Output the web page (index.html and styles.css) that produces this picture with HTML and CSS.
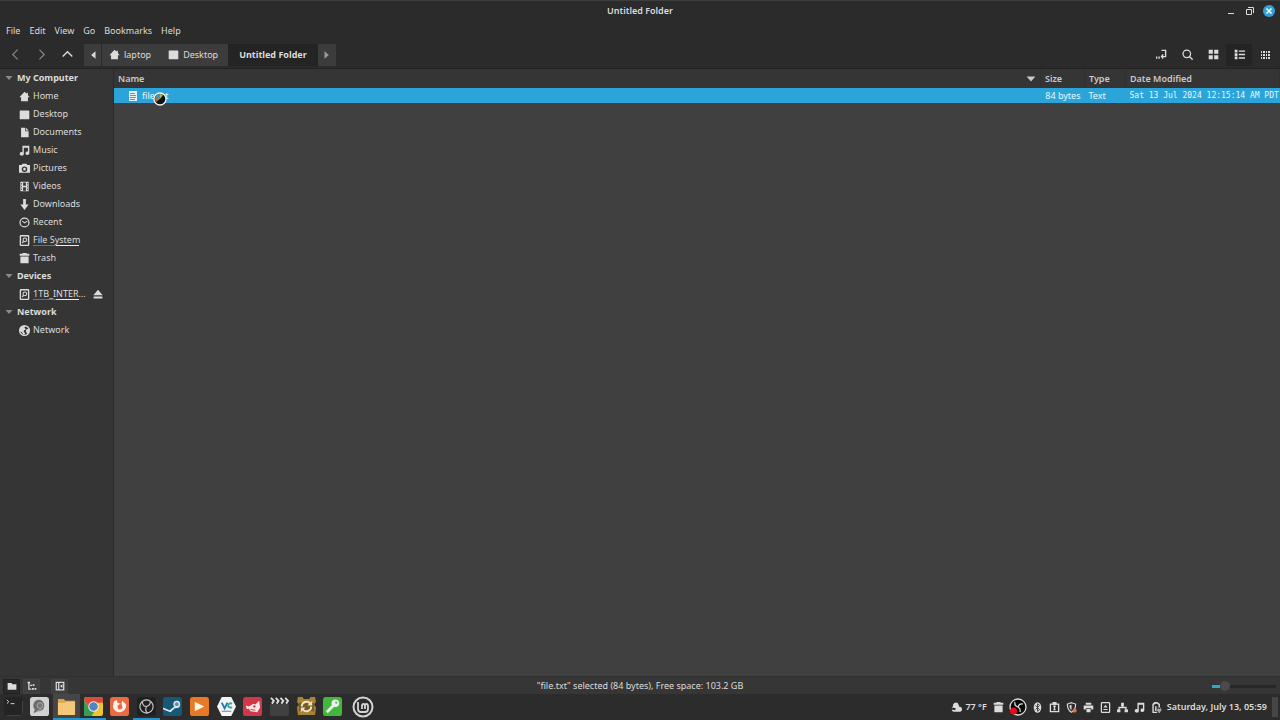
FILE: index.html
```html
<!DOCTYPE html>
<html lang="en">
<head>
<meta charset="utf-8">
<title>Untitled Folder</title>
<link rel="stylesheet" href="styles.css">
</head>
<body>
<svg class="sprite" aria-hidden="true">
  <symbol id="home" viewBox="0 0 16 16"><path d="M8 1 0.5 9H3v6h10V9h2.5L13 6.2V2.5h-2v1.6z"/></symbol>
  <symbol id="desktop" viewBox="0 0 16 16"><rect x="1" y="2" width="14" height="13" rx="1"/></symbol>
  <symbol id="document" viewBox="0 0 16 16"><path d="M3 1h6v5h5v9H3z"/><path d="M10 1l4 4h-4z"/></symbol>
  <symbol id="music" viewBox="0 0 16 16"><path d="M5 1h10v11a2.8 2.5 0 1 1-2-2.4V4H7v9a3 2.5 0 1 1-2-2.4z"/></symbol>
  <symbol id="camera" viewBox="0 0 16 16"><path fill-rule="evenodd" d="M5 1h6l1 2h4v11H0V3h4zM8 5a4 4 0 1 0 0 8 4 4 0 0 0 0-8zm0 2a2 2 0 1 1 0 4 2 2 0 0 1 0-4z"/></symbol>
  <symbol id="video" viewBox="0 0 16 16"><path fill-rule="evenodd" d="M2 1h12v14H2zM3 3v2h1V3zm0 4v2h1V7zm0 4v2h1v-2zM6 2v5h4V2zm0 7v5h4V9zM12 3v2h1V3zm0 4v2h1V7zm0 4v2h1v-2z"/></symbol>
  <symbol id="download" viewBox="0 0 16 16"><path d="M6 0h4v8h4l-6 8-6-8h4z"/></symbol>
  <symbol id="recent" viewBox="0 0 16 16"><circle cx="8" cy="8" r="6.5" fill="none" stroke="currentColor" stroke-width="1.8"/><path d="M5 6l3 2.5L12 6" fill="none" stroke="currentColor" stroke-width="1.5"/></symbol>
  <symbol id="disk" viewBox="0 0 16 16"><g fill="none" stroke="currentColor"><rect x="2" y="1" width="12" height="14" rx="1" stroke-width="2"/><circle cx="8.5" cy="7" r="2.7" stroke-width="1.5"/></g><path d="M4.5 9.5 8 9l-2.5 3h-1z"/></symbol>
  <symbol id="trash" viewBox="0 0 16 16"><path d="M1 1h4V0h6v1h4v3H1zM2 5h12v10H2z"/></symbol>
  <symbol id="globe" viewBox="0 0 16 16"><circle cx="8" cy="8" r="7" fill="none" stroke="currentColor" stroke-width="2"/><path d="M1 6l3-4 5-1-1 3 2 2-3 2v2l2 2-2 3-3-5-3-1zM11 6l4-1v5l-3 3-2-4z"/></symbol>
  <symbol id="eject" viewBox="0 0 16 16"><path d="M8 1 15.5 10H.5zM1 12h14v3H1z"/></symbol>
  <symbol id="tri-down" viewBox="0 0 16 16"><path d="M1 4h14l-7 8z"/></symbol>
  <symbol id="tri-left" viewBox="0 0 16 16"><path d="M12 2v12L5 8z"/></symbol>
  <symbol id="tri-right" viewBox="0 0 16 16"><path d="M4 2v12l7-6z"/></symbol>
  <symbol id="chev-left" viewBox="0 0 16 16"><path d="M11 1 4 8l7 7" fill="none" stroke="currentColor" stroke-width="1.6"/></symbol>
  <symbol id="chev-right" viewBox="0 0 16 16"><path d="M5 1l7 7-7 7" fill="none" stroke="currentColor" stroke-width="1.6"/></symbol>
  <symbol id="chev-up" viewBox="0 0 16 16"><path d="M1 11l7-7 7 7" fill="none" stroke="currentColor" stroke-width="2"/></symbol>
  <symbol id="path-entry" viewBox="0 0 16 16"><path d="M8 2h6v9H8M10.500 8 8 11l2.500 3" fill="none" stroke="currentColor" stroke-width="2"/><path d="M0 11h2v3H0zM3.500 11h2v3h-2z"/></symbol>
  <symbol id="search" viewBox="0 0 16 16"><circle cx="7" cy="7" r="5.5" fill="none" stroke="currentColor" stroke-width="1.8"/><path d="M10.500 10.500l5 5" stroke="currentColor" stroke-width="2"/></symbol>
  <symbol id="grid" viewBox="0 0 16 16"><path d="M1 1h6v6H1zM9 1h6v6H9zM1 9h6v6H1zM9 9h6v6H9z"/></symbol>
  <symbol id="list" viewBox="0 0 16 16"><path d="M1 1h4v4H1zM1 6h4v4H1zM1 11h4v4H1zM7 2h9v2H7zM7 7h9v2H7zM7 12h9v2H7z"/></symbol>
  <symbol id="compact" viewBox="0 0 10 10"><path d="M1 1h1v2H1zM3 1h2v2H3zM1 4h1v2H1zM3 4h2v2H3zM1 7h1v2H1zM3 7h2v2H3zM6 1h1v2H6zM8 1h2v2H8zM6 4h1v2H6zM8 4h2v2H8zM6 7h1v2H6zM8 7h2v2H8z"/></symbol>
  <symbol id="folder" viewBox="0 0 16 16"><path d="M1 3h6l2 2h6v9H1z"/></symbol>
  <symbol id="tree" viewBox="0 0 16 16"><path d="M1 1h4v3H4v8h3v2H2V4H1zM5 6h3v2H5zM9 5h3v3H9zM8 11h3v3H8zM12 11h3v3h-3z"/></symbol>
  <symbol id="panel" viewBox="0 0 16 16"><path fill-rule="evenodd" d="M1 1h14v14H1zM3 3v10h2V3zm4 0v10h6V3z"/><path d="M12 5v6L8 8z"/></symbol>
  <symbol id="cloud" viewBox="0 0 16 16"><path d="M3 6a4 4 0 0 1 8-2l1 3a3.500 3.500 0 0 1 1 7H4a3 3 0 0 1-3-3l5 1 1-3-6-1z"/></symbol>
  <symbol id="bluetooth" viewBox="0 0 16 16"><ellipse cx="8" cy="8" rx="5.500" ry="7.500"/><path d="M5 5l6 6-3 2.500v-11L11 5l-6 6" fill="none" stroke="#2c2c2c" stroke-width="1.200"/></symbol>
  <symbol id="clipboard" viewBox="0 0 16 16"><path d="M2 3h12v11H2z" fill="none" stroke="currentColor" stroke-width="2"/><path d="M5 0h6v4H5zM6 5h4v2H9v4h1v1H6v-1h1V7H6z"/></symbol>
  <symbol id="shield" viewBox="0 0 16 16"><path d="M8 1l6 2c0 6-2 10-6 12C4 13 2 9 2 3z" fill="none" stroke="currentColor" stroke-width="1.700"/><path d="M8 4v8C6 10 5 8 5 5z"/><circle cx="12.500" cy="12.500" r="3" fill="#df7544"/></symbol>
  <symbol id="printer" viewBox="0 0 16 16"><path d="M4 1h8v3H4zM1 5h14v6h-3V9H4v2H1zM5 10h6v5H5z"/></symbol>
  <symbol id="usb" viewBox="0 0 16 16"><rect x="2" y="1" width="12" height="14" rx="1" fill="none" stroke="currentColor" stroke-width="1.800"/><path d="M8 4l3 4H5zM5 10h6v1.500H5z"/></symbol>
  <symbol id="network" viewBox="0 0 16 16"><path d="M6 1h4v5H9v1h5v4h2v4h-5v-4h1V9H4v2h1v4H0v-4h2V7h5V6H6z"/></symbol>
  <symbol id="battery" viewBox="0 0 16 16"><path d="M2 3l3-3h4l4 3v5h-2V4L8 2 4 4v10h5v2H2z"/><path d="M6 6h2v7H6z"/><path d="M10 8h1v2h2V8h1v2h1v3l-2 1v2h-2v-2l-2-1v-3h1z" fill="#aaa"/></symbol>
</svg>

<header class="chrome">
  <div class="titlebar">
    <h1 class="title">Untitled Folder</h1>
    <div class="window-controls">
      <button class="win-btn" aria-label="Minimize"><svg class="ic10" viewBox="0 0 10 10"><path d="M2 7h6v1H2z"/></svg></button>
      <button class="win-btn" aria-label="Restore"><svg class="ic10" viewBox="0 0 10 10"><path d="M1.500 3.500h5v5h-5zM3 1.500h5.500V7" fill="none" stroke="currentColor"/></svg></button>
      <button class="win-btn close" aria-label="Close"><svg class="ic10" viewBox="0 0 10 10"><path d="M2.500 2.500l5 5M7.500 2.500l-5 5" fill="none" stroke="currentColor" stroke-width="1.500"/></svg></button>
    </div>
  </div>
  <nav class="menubar" aria-label="Menu">
    <button>File</button><button>Edit</button><button>View</button><button>Go</button><button>Bookmarks</button><button>Help</button>
  </nav>
  <div class="toolbar">
    <div class="nav-buttons">
      <button class="tool dim" aria-label="Back"><svg class="ic12"><use href="#chev-left"/></svg></button>
      <button class="tool dim" aria-label="Forward"><svg class="ic12"><use href="#chev-right"/></svg></button>
      <button class="tool" aria-label="Up"><svg class="ic12"><use href="#chev-up"/></svg></button>
    </div>
    <nav class="pathbar" aria-label="Path">
      <button class="crumb arrow" aria-label="Scroll left"><svg class="ic10"><use href="#tri-left"/></svg></button>
      <button class="crumb"><svg class="ic12"><use href="#home"/></svg>laptop</button>
      <button class="crumb"><svg class="ic12"><use href="#desktop"/></svg>Desktop</button>
      <button class="crumb current">Untitled Folder</button>
      <button class="crumb arrow muted" aria-label="Scroll right"><svg class="ic10"><use href="#tri-right"/></svg></button>
    </nav>
    <div class="view-buttons">
      <button class="tool" aria-label="Toggle location entry"><svg class="ic12"><use href="#path-entry"/></svg></button>
      <button class="tool" aria-label="Search"><svg class="ic12"><use href="#search"/></svg></button>
      <button class="tool" aria-label="Icon view"><svg class="ic12"><use href="#grid"/></svg></button>
      <button class="tool active" aria-label="List view"><svg class="ic12"><use href="#list"/></svg></button>
      <button class="tool" aria-label="Compact view"><svg class="ic10"><use href="#compact"/></svg></button>
    </div>
  </div>
</header>

<div class="workspace">
  <aside class="sidebar">
    <h2 class="group"><svg class="ic8"><use href="#tri-down"/></svg>My Computer</h2>
    <a class="place" href="#"><svg class="ic12"><use href="#home"/></svg><span>Home</span></a>
    <a class="place" href="#"><svg class="ic12"><use href="#desktop"/></svg><span>Desktop</span></a>
    <a class="place" href="#"><svg class="ic12"><use href="#document"/></svg><span>Documents</span></a>
    <a class="place" href="#"><svg class="ic12"><use href="#music"/></svg><span>Music</span></a>
    <a class="place" href="#"><svg class="ic12"><use href="#camera"/></svg><span>Pictures</span></a>
    <a class="place" href="#"><svg class="ic12"><use href="#video"/></svg><span>Videos</span></a>
    <a class="place" href="#"><svg class="ic12"><use href="#download"/></svg><span>Downloads</span></a>
    <a class="place" href="#"><svg class="ic12"><use href="#recent"/></svg><span>Recent</span></a>
    <a class="place" href="#"><svg class="ic12"><use href="#disk"/></svg><span class="usage">File System</span></a>
    <a class="place" href="#"><svg class="ic12"><use href="#trash"/></svg><span>Trash</span></a>
    <h2 class="group"><svg class="ic8"><use href="#tri-down"/></svg>Devices</h2>
    <div class="device">
      <a class="place" href="#"><svg class="ic12"><use href="#disk"/></svg><span class="usage">1TB_INTER…</span></a>
      <button class="eject" aria-label="Eject"><svg class="ic10"><use href="#eject"/></svg></button>
    </div>
    <h2 class="group"><svg class="ic8"><use href="#tri-down"/></svg>Network</h2>
    <a class="place" href="#"><svg class="ic12"><use href="#globe"/></svg><span>Network</span></a>
  </aside>
  <main class="files">
    <table class="file-table">
      <colgroup><col><col class="col-size"><col class="col-type"><col class="col-date"></colgroup>
      <thead>
        <tr><th><span class="sorted">Name<svg class="ic10"><use href="#tri-down"/></svg></span></th><th>Size</th><th>Type</th><th>Date Modified</th></tr>
      </thead>
      <tbody>
        <tr>
          <td class="name"><span class="file"><svg class="ic10" viewBox="0 0 10 10"><path d="M1 0h8v10H1z" fill="#e8f1f5"/><path d="M2 2.500h5M2 4.500h6M2 6.500h6M2 8.500h5" stroke="#6795aa"/></svg>file.txt<svg class="cursor" viewBox="0 0 14 14"><circle cx="7" cy="7" r="6" fill="#111"/><path d="M7 7 2 7a5 5 0 0 1 5-5z" fill="#4999a4"/><path d="M7 7V2a5 5 0 0 1 3 1z" fill="#a8bc48"/><path d="M7 7l-4 3a5 5 0 0 1-1-4z" fill="#c46b22"/><circle cx="7" cy="7" r="6" fill="none" stroke="#f2f2f2" stroke-width="1.300"/></svg></span></td>
          <td class="size">84 bytes</td><td>Text</td><td class="date">Sat 13 Jul 2024 12:15:14 AM PDT</td>
        </tr>
      </tbody>
    </table>
  </main>
</div>

<footer class="statusbar">
  <div class="status-buttons">
    <button class="pane-btn pressed" aria-label="Places"><svg class="ic10"><use href="#folder"/></svg></button>
    <button class="pane-btn" aria-label="Tree"><svg class="ic10"><use href="#tree"/></svg></button>
    <button class="pane-btn apart" aria-label="Hide sidebar"><svg class="ic10"><use href="#panel"/></svg></button>
  </div>
  <p class="status">"file.txt" selected (84 bytes), Free space: 103.2 GB</p>
  <div class="zoom-box"><input class="zoom" type="range" min="0" max="100" value="14" aria-label="Zoom"></div>
</footer>

<div class="taskbar">
  <div class="launchers">
    <button class="app" aria-label="Terminal"><svg viewBox="0 0 20 20"><rect width="20" height="20" rx="3" fill="#242424"/><path d="M3 19.500h14a2.500 2.500 0 0 0 2.500-3V4" fill="none" stroke="#444"/><path d="M3 3l2 2-2 2M7 7h4" fill="none" stroke="#ddd"/></svg></button>
    <button class="app" aria-label="System settings"><svg viewBox="0 0 20 20"><rect x="0" y="0" width="20" height="20" rx="3" fill="#d2d2d2"/><path d="M10 3a6 6 0 1 1-2 12l-4 2 1-4A6 6 0 0 1 10 3z" fill="#6d6d6d"/><circle cx="10.500" cy="9" r="3" fill="#777" stroke="#aaa"/><path d="M7 15l5-2" stroke="#aaa"/></svg></button>
    <button class="app focused open" aria-label="Files"><svg viewBox="0 0 20 20"><path d="M1 2h6l2 2h10v14H1z" fill="#dca54f"/><path d="M1 6h7l2-1h9v14H1z" fill="#f5c779"/></svg></button>
    <button class="app open" aria-label="Chrome"><svg viewBox="0 0 20 20"><rect width="20" height="20" rx="3" fill="#efc52f"/><path d="M3 0h14a3 3 0 0 1 3 3v3H10L6 12 0 3a3 3 0 0 1 3-3z" fill="#db4a3a"/><path d="M0 3l6 10 5 2-3 5H3a3 3 0 0 1-3-3z" fill="#369e51"/><circle cx="10" cy="10" r="5.500" fill="#eee"/><circle cx="10" cy="10" r="4.500" fill="#5085c4"/></svg></button>
    <button class="app" aria-label="Firefox"><svg viewBox="0 0 20 20"><rect width="20" height="20" rx="3" fill="#e96a43"/><path d="M4 5l3-2 1 3 3 1-3 2v2a2.500 2.500 0 1 0 5-1l-1-3 1-3 4 4a7 7 0 1 1-14 2z" fill="#fff0ea"/></svg></button>
    <button class="app open" aria-label="OBS Studio"><svg viewBox="0 0 20 20"><rect width="20" height="20" rx="3" fill="#202020"/><g fill="none" stroke="#c9c9c9" stroke-width="1.200"><circle cx="10" cy="10" r="7"/><path d="M10 10Q6 10 5.500 5M10 10q4-1 4-5M10 10q-2 4 1 7"/></g></svg></button>
    <button class="app" aria-label="Steam"><svg viewBox="0 0 20 20"><rect width="20" height="20" rx="3" fill="#175879"/><path d="M0 11l7 3 5-4-1-3 4-3 3 3-1 4-5 1-4 4-3-1-5-2z" fill="#d7e5ed"/><circle cx="14.500" cy="7.500" r="3.500" fill="#d7e5ed"/><circle cx="14.500" cy="7.500" r="2" fill="#608ba1"/></svg></button>
    <button class="app" aria-label="Media player"><svg viewBox="0 0 20 20"><rect width="20" height="20" rx="3" fill="#e77927"/><path d="M5 5l10 5-10 5z" fill="#fff5e9"/></svg></button>
    <button class="app" aria-label="VeraCrypt"><svg viewBox="0 0 20 20"><path d="M5 0h10l5 10-5 10H5L0 10z" fill="#f5f5f5"/><path d="M5 6l3 6 3-6" fill="none" stroke="#257dae" stroke-width="2"/><path d="M16 7c-5-2-6 5-1 4h1" fill="none" stroke="#35a89c" stroke-width="2"/><path d="M5 15h10" stroke="#777"/></svg></button>
    <button class="app" aria-label="GIMP"><svg viewBox="0 0 20 20"><rect width="20" height="20" rx="3" fill="#ce3847"/><path d="M3 9l3 1 5-3 2 1 4-4 1 7-3 5-7-1-2-3-2 1z" fill="#f8e7e8"/><circle cx="12" cy="10" r="1.200" fill="#bd3442"/><path d="M8 13l5 1" stroke="#ce3847"/></svg></button>
    <button class="app" aria-label="Video editor"><svg viewBox="0 0 20 20"><rect y="7" width="20" height="13" rx="2" fill="#414141"/><path d="M1 1l3 3-2 3M6 1l3 3-2 3M11 1l3 3-2 3M16 1l3 3-2 3" fill="none" stroke="#ddd" stroke-width="2"/></svg></button>
    <button class="app" aria-label="Backup"><svg viewBox="0 0 20 20"><path d="M1 0h5l1 2h6l1-2h5l1 5-2 3 2 3-1 8H1L0 11l2-3-2-3z" fill="#a78435"/><path d="M2 6h16v9H2z" fill="#765b25"/><path d="M5 10a5 5 0 0 1 9-3M15 10a5 5 0 0 1-9 3" fill="none" stroke="#eee2c6" stroke-width="2"/><path d="M16 4v5h-5zM4 16v-5h5z" fill="#eee2c6"/></svg></button>
    <button class="app" aria-label="Passwords"><svg viewBox="0 0 20 20"><rect width="20" height="20" rx="3" fill="#43b63c"/><path d="M4 16l8-8" stroke="#eef8ed" stroke-width="3"/><circle cx="13" cy="6.500" r="4" fill="#e9f4e8"/><circle cx="14" cy="6" r="1.200" fill="#7ea77b"/></svg></button>
  </div>
  <button class="mint" aria-label="Menu"><svg viewBox="0 0 22 22"><g fill="none" stroke="#d4d4d4"><circle cx="11" cy="11" r="9.500" stroke-width="2"/><path d="M6 6v7q0 3 3 3h4q3 0 3-3v-3q0-2-1.500-2T13 10v3M13 10q0-2-1.500-2T10 10v3" stroke-width="1.800"/></g></svg></button>
  <div class="tray">
    <button class="weather" aria-label="Weather 77 °F"><svg class="ic12"><use href="#cloud"/></svg>77 °F</button>
    <div class="tray-icons">
      <button aria-label="Trash"><svg class="ic12"><use href="#trash"/></svg></button>
      <button class="obs" aria-label="Recording"><svg viewBox="0 0 18 18"><circle cx="9" cy="9" r="8" fill="#080808" stroke="#ddd" stroke-width="1.300"/><path d="M9 9Q5 8 6 4M9 9q1-4 5-3M9 9q3 2 2 5" fill="none" stroke="#ddd" stroke-width="1.200"/><circle cx="4.500" cy="13" r="3.500" fill="#e50b17"/></svg></button>
      <button aria-label="Bluetooth"><svg class="ic12"><use href="#bluetooth"/></svg></button>
      <button aria-label="Clipboard"><svg class="ic12"><use href="#clipboard"/></svg></button>
      <button aria-label="Updates"><svg class="ic12"><use href="#shield"/></svg></button>
      <button aria-label="Printer"><svg class="ic12"><use href="#printer"/></svg></button>
      <button aria-label="Removable drives"><svg class="ic12"><use href="#usb"/></svg></button>
      <button aria-label="Network"><svg class="ic12"><use href="#network"/></svg></button>
      <button aria-label="Sound"><svg class="ic12"><use href="#music"/></svg></button>
      <button aria-label="Power"><svg class="ic12"><use href="#battery"/></svg></button>
    </div>
    <button class="clock">Saturday, July 13, 05:59</button>
    <button class="show-desktop" aria-label="Show desktop"></button>
  </div>
</div>
</body>
</html>
```
FILE: styles.css
```css
* { box-sizing: border-box; }
body {
  margin: 0;
  min-height: 100vh;
  display: flex;
  flex-direction: column;
  background: #404040;
  color: #dcdcdc;
  font: 9px/18px "Noto Sans", "Open Sans", sans-serif;
}
button {
  display: flex;
  align-items: center;
  justify-content: center;
  margin: 0;
  padding: 0;
  border: 0;
  background: none;
  color: inherit;
  font: inherit;
  white-space: nowrap;
}
a { color: inherit; text-decoration: none; }
h1, h2, p { margin: 0; font-size: 9px; }
svg { display: block; flex: none; fill: currentColor; }
.sprite { position: absolute; width: 0; height: 0; }
.ic8 { width: 8px; height: 8px; }
.ic10 { width: 10px; height: 10px; }
.ic12 { width: 11px; height: 11px; }

.chrome { background: #2b2b2b; border-top: 1px solid #3d3d3d; border-bottom: 1px solid #222; }
.titlebar { display: grid; grid-template-columns: 1fr auto 1fr; align-items: center; height: 20px; }
.title { grid-column: 2; font-weight: 600; }
.window-controls { display: flex; justify-content: flex-end; gap: 7px; padding-right: 5px; }
.win-btn { width: 12px; height: 12px; border-radius: 50%; }
.close { background: #2fa3d7; color: #fff; }
.menubar { display: flex; gap: 9px; height: 20px; padding-left: 6px; }
.toolbar { display: flex; align-items: center; height: 27px; }
.nav-buttons, .view-buttons { display: flex; }
.nav-buttons { padding-left: 2px; }
.view-buttons { margin-left: auto; padding-right: 2px; }
.tool { width: 26px; height: 22px; }
.active { background: #242424; }
.dim { color: #8a8a8a; }
.pathbar { display: flex; margin-left: 4px; }
.crumb { height: 22px; gap: 4px; padding: 0 10px 0 7px; background: #3c3c3c; }
.arrow { width: 18px; padding: 0; border-right: 1px solid #292929; }
.current { padding: 0 11px; background: #242424; font-weight: 700; }
.muted { border: 0; color: #9a9a9a; }

.workspace { flex: 1; display: flex; }
.sidebar { width: 114px; background: #353535; border-right: 1px solid #2a2a2a; }
.group { display: flex; align-items: center; gap: 4px; height: 18px; padding-left: 5px; font-weight: 700; }
.group svg { color: #8b8b8b; }
.place { display: flex; align-items: center; gap: 3px; height: 18px; padding-left: 19px; }
.device { display: flex; align-items: center; gap: 7px; }
.usage {
  height: 12px;
  line-height: 12px;
  background: linear-gradient(90deg, #2788b4 50%, #eee 50%) left bottom / 46px 1px no-repeat;
}
.files { flex: 1; min-width: 0; }
.file-table { width: 100%; border-collapse: collapse; table-layout: fixed; }
.col-size { width: 44px; }
.col-type { width: 41px; }
.col-date { width: 154px; }
th, td { padding: 0 0 0 4px; text-align: left; white-space: nowrap; }
th { height: 19px; background: #353535; color: #cacaca; font-weight: 600; border-right: 1px solid #303030; }
td { height: 15px; line-height: 15px; background: #2ba5d9; color: #eaf7fc; }
.sorted { display: flex; align-items: center; justify-content: space-between; padding-right: 4px; }
.name { padding-left: 14px; }
.size { text-align: right; }
td + td { padding-right: 4px; }
.date { padding: 0 0 0 4px; font: 8px/15px "DejaVu Sans Mono", monospace; }
.file { position: relative; display: flex; align-items: center; gap: 4px; height: 15px; }
.cursor { position: absolute; left: 25px; top: 4px; width: 14px; height: 14px; }

.statusbar {
  display: grid;
  grid-template-columns: 1fr auto 1fr;
  align-items: center;
  height: 18px;
  background: #363636;
  border-top: 1px solid #303030;
}
.status-buttons { display: flex; gap: 3px; padding-left: 3px; }
.pane-btn { width: 17px; height: 15px; background: #3e3e3e; border: 1px solid #424242; }
.pressed { background: #292929; border-color: #222; }
.apart { margin-left: 8px; }
.zoom-box { display: flex; justify-content: flex-end; padding-right: 4px; }
.zoom { appearance: none; width: 64px; height: 12px; margin: 0; background: linear-gradient(90deg, #36a2ce 12%, #272727 12%) center / 100% 3px no-repeat; }
.zoom::-webkit-slider-thumb { appearance: none; width: 10px; height: 10px; border-radius: 50%; background: #4a4a4a; }

.taskbar { display: flex; align-items: center; height: 26px; background: #2c2c2c; }
.launchers { display: flex; width: 346px; height: 26px; }
.app { flex: 1; border-bottom: 2px solid transparent; }
.app svg { width: 19px; height: 19px; }
.open { border-color: #2795c9; }
.focused { background-color: #464646; }
.mint { margin-left: 6px; }
.mint svg { width: 22px; height: 22px; }
.tray { display: flex; align-items: center; margin-left: auto; font-weight: 600; }
.weather { gap: 3px; }
.tray-icons { display: flex; margin-left: 3px; }
.tray-icons button { width: 17px; }
.tray-icons .obs { width: 22px; }
.obs svg { width: 18px; height: 18px; }
.clock { margin-left: 2px; }
.show-desktop { width: 6px; height: 20px; margin: 0 2px 0 5px; background: #464646; }
```
